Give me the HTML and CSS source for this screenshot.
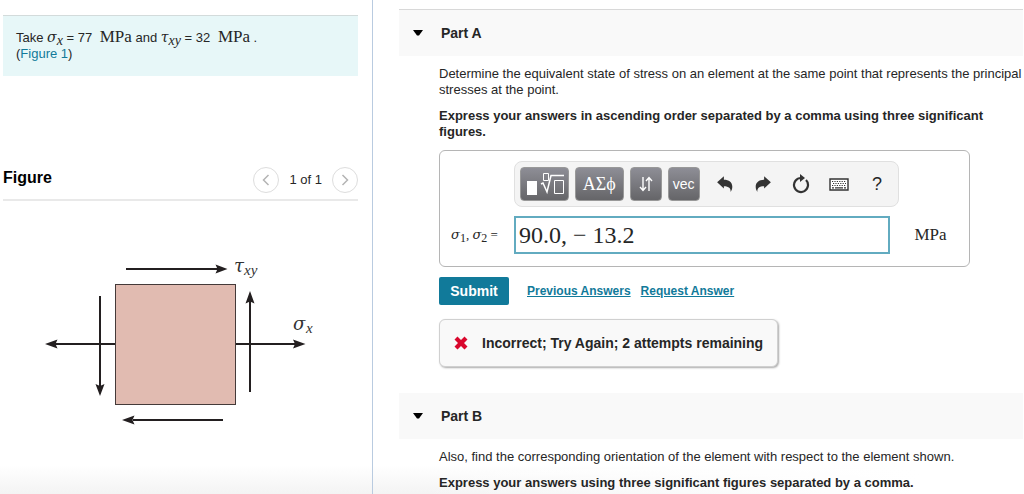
FILE: index.html
```html
<!DOCTYPE html>
<html lang="en">
<head>
<meta charset="utf-8">
<meta name="viewport" content="width=device-width, initial-scale=1">
<title>Principal stresses</title>
<link rel="stylesheet" href="styles.css">
</head>
<body>
<div class="page">
  <aside class="sidebar">
    <div class="given">
      <p>Take <span class="math"><i>σ</i><sub><i>x</i></sub></span> = 77 <span class="math quantity">MPa</span> and <span class="math"><i>τ</i><sub><i>xy</i></sub></span> = 32 <span class="math quantity">MPa</span> .</p>
      <p>(<a href="#figure">Figure 1</a>)</p>
    </div>
    <section class="figure" id="figure">
      <header class="figure-head">
        <h2>Figure</h2>
        <nav class="pager" aria-label="Figures">
          <button type="button" aria-label="Previous figure"><svg width="8" height="12" viewBox="0 0 8 12"><path d="M6.5 1 1.5 6l5 5"/></svg></button>
          <span>1 of 1</span>
          <button type="button" aria-label="Next figure"><svg width="8" height="12" viewBox="0 0 8 12"><path d="m1.500 1 5 5-5 5"/></svg></button>
        </nav>
      </header>
      <svg class="diagram" viewBox="0 0 355 180" role="img" aria-label="Stress element">
        <rect x="112.5" y="34.5" width="120" height="120" fill="#e1bbb1" stroke="#443a39"/>
        <g stroke="#231f20" stroke-width="2" fill="none">
          <path d="M123 19h94M220 170h-90M97 46v92M247 142V50M112 94H50M233 94h62"/>
        </g>
        <g fill="#231f20">
          <path d="m224.500 19-12-4.500 2 4.500-2 4.500zM119 170l12.500-4.500-2 4.500 2 4.500zM97 146l-4.500-12 4.500 2 4.500-2zM247 41l-4.500 12.500 4.500-2 4.500 2zM42 94l12.500-4.500-2 4.500 2 4.500zM302.500 94l-12.500-4.500 2 4.500-2 4.500z"/>
        </g>
        <g class="diagram-text">
          <text class="symbol" x="231" y="22">τ</text><text x="241" y="25">xy</text>
          <text class="symbol" x="290" y="80">σ</text><text x="303" y="83">x</text>
        </g>
      </svg>
    </section>
  </aside>

  <main class="content">
    <section class="part">
      <h2 class="part-head part-head-first"><button type="button" aria-expanded="true"><svg width="10" height="6" viewBox="0 0 10 6"><path d="M0 0h10L6 5.500H4z"/></svg>Part A</button></h2>
      <div class="part-body">
        <p>Determine the equivalent state of stress on an element at the same point that represents the principal stresses at the point.</p>
        <p class="strong narrow">Express your answers in ascending order separated by a comma using three significant figures.</p>
        <form class="work">
          <div class="answer">
            <div class="toolbar">
              <button class="key key-wide" type="button" aria-label="Templates">
                <svg width="40" height="26" viewBox="0 0 40 26" fill="none" stroke="#fff"><path fill="#fff" stroke="none" d="M3 10h10v14H3z"/><path d="M19.500 2.500h5v7h-5zM30.500 9.500h9v13h-9z"/><path stroke-width="1.500" d="m17 13 2-1 4 9 4-16.500h13"/></svg>
              </button>
              <button class="key key-wide greek" type="button">ΑΣϕ</button>
              <button class="key" type="button" aria-label="Subscripts and superscripts">
                <svg width="14" height="18" viewBox="0 0 14 18" fill="none" stroke="#fff" stroke-width="1.400"><path d="M4 2v13M1 12l3 3.500L7 12M10 16V3M7 6l3-3.500L13 6"/></svg>
              </button>
              <button class="key" type="button">vec</button>
              <button class="tool tool-first" type="button" aria-label="Undo">
                <svg width="18" height="18" viewBox="0 0 16 16"><path d="M7 1v3.200c4.500 0 7.500 2.300 7.500 6.300 0 2-.7 3.500-1.500 4.500.3-3-1.500-5-6-5V12L1 6.500z"/></svg>
              </button>
              <button class="tool" type="button" aria-label="Redo">
                <svg width="18" height="18" viewBox="0 0 16 16"><path d="M9 1v3.200c-4.500 0-7.500 2.300-7.500 6.300 0 2 .7 3.500 1.500 4.500-.3-3 1.500-5 6-5V12l6-5.500z"/></svg>
              </button>
              <button class="tool" type="button" aria-label="Reset">
                <svg width="18" height="20" viewBox="0 0 18 20"><path fill="none" stroke="#333" stroke-width="2.200" d="M9 4a7 7 0 1 0 5 2.100"/><path d="m8 0 5 4-5 4z"/></svg>
              </button>
              <button class="tool" type="button" aria-label="Keyboard shortcuts">
                <svg class="keyboard" width="20" height="13" viewBox="0 0 20 13"><path fill="#fff" stroke="#333" stroke-width="1.400" d="M1 1h18v11H1z"/><path fill="none" stroke="#333" stroke-width="1.200" stroke-dasharray="1.200 1.200" d="M3 3.500h14M4 5.500h13M3 7.500h14"/><path stroke="#333" stroke-width="1.200" d="M3 9.800h2M6 9.800h8M15 9.800h2"/></svg>
              </button>
              <button class="tool help" type="button">?</button>
            </div>
            <label class="math answer-label" for="answer"><i>σ</i><sub>1</sub>, <i>σ</i><sub>2</sub> =</label>
            <input class="answer-input" id="answer" type="text" value="90.0, − 13.2">
            <span class="math unit">MPa</span>
          </div>
          <div class="actions">
            <button class="submit" type="button">Submit</button>
            <a href="#previous">Previous Answers</a>
            <a href="#request">Request Answer</a>
          </div>
          <div class="feedback" role="status">
            <svg width="14" height="14" viewBox="0 0 14 14"><path fill="#d9082d" d="m3.500 0.500 3.500 3.500 3.500-3.500 3 3L10 7l3.500 3.500-3 3L7 10l-3.500 3.500-3-3L4 7 .5 3.500z"/></svg>
            <span>Incorrect; Try Again; 2 attempts remaining</span>
          </div>
        </form>
      </div>
    </section>
    <section class="part">
      <h2 class="part-head"><button type="button" aria-expanded="true"><svg width="10" height="6" viewBox="0 0 10 6"><path d="M0 0h10L6 5.500H4z"/></svg>Part B</button></h2>
      <div class="part-body">
        <p>Also, find the corresponding orientation of the element with respect to the element shown.</p>
        <p class="strong">Express your answers using three significant figures separated by a comma.</p>
      </div>
    </section>
  </main>
</div>
</body>
</html>
```

FILE: styles.css
```css
* {
  box-sizing: border-box;
}

body {
  margin: 0;
  font: 13px/16px "Liberation Sans", Arial, sans-serif;
  color: #262626;
  background: #fff;
}

p,
h2 {
  margin: 0;
}

button {
  padding: 0;
  border: 0;
  background: none;
  font: inherit;
  color: inherit;
}

svg {
  display: block;
}

a {
  color: #117a9a;
}

.page {
  display: grid;
  grid-template-columns: minmax(0, 373fr) minmax(0, 651fr);
  min-height: 100vh;
  background:
    linear-gradient(to right, transparent 40%, #fff 90%),
    linear-gradient(to top, #f1f1f1, #fff 36px);
}

.math {
  font-family: "Liberation Serif", "Times New Roman", serif;
  font-size: 17px;
}

.math > i {
  font-family: "DejaVu Serif", serif;
  font-size: 14px;
}

.math sub {
  font-size: 14px;
  line-height: 0;
  vertical-align: -3px;
}

.quantity {
  margin-left: 4px;
}

/* Left column */

.sidebar {
  padding: 15px 14px 0 3px;
  border-right: 1px solid #b9cbe0;
}

.given {
  padding: 12px 13px 14px;
  border-top: 1px solid #d3dbdb;
  background: #e7f7f8;
  line-height: 17px;
}

.given p {
  height: 17px;
}

.given a {
  text-decoration: none;
}

.figure {
  margin-top: 91px;
}

.figure-head {
  display: flex;
  justify-content: space-between;
  padding-bottom: 6px;
  border-bottom: 2px solid #e9e9e9;
}

.figure-head h2 {
  font-size: 16px;
  line-height: 22px;
  color: #000;
}

.pager {
  display: flex;
  align-items: center;
  gap: 10px;
}

.pager button {
  display: grid;
  place-items: center;
  width: 26px;
  height: 26px;
  border: 1px solid #ddd;
  border-radius: 50%;
  background: #fff;
}

.pager path {
  fill: none;
  stroke: #b4b4b4;
  stroke-width: 1.5;
}

.diagram {
  width: 100%;
  margin-top: 49px;
}

.diagram-text {
  font-family: "Liberation Serif", serif;
  font-size: 15px;
  font-style: italic;
  fill: #333;
}

.symbol {
  font-family: "DejaVu Serif", serif;
  font-size: 18px;
}

/* Right column */

.content {
  padding: 9px 1px 0 26px;
}

.part-head {
  background: #f9f9f9;
  font-size: 14px;
}

.part-head-first {
  border-top: 1px solid #d8d8d8;
}

.part-head button {
  display: flex;
  align-items: center;
  gap: 18px;
  width: 100%;
  padding: 15px 14px;
}

.part-body {
  display: grid;
  gap: 10px;
  padding: 10px 0 10px 40px;
}

.strong {
  font-weight: bold;
}

.narrow {
  max-width: 560px;
}

.work {
  display: grid;
  justify-items: start;
  padding-bottom: 16px;
}

.answer {
  display: grid;
  grid-template-columns: 52px minmax(0, 376fr) minmax(0, 57fr);
  column-gap: 11px;
  row-gap: 9px;
  align-items: center;
  width: 91%;
  padding: 10px 11px 12px;
  border: 1px solid #b5b5b5;
  border-radius: 6px;
  background: #fff;
}

.toolbar {
  grid-column: 2 / 4;
  display: flex;
  align-items: center;
  gap: 6px;
  width: 385px;
  padding: 5px;
  border: 1px solid #e0e0e0;
  border-radius: 8px;
  background: #f4f4f4;
}

.key {
  display: grid;
  place-items: center;
  width: 32px;
  height: 34px;
  border: 1px solid #999;
  border-radius: 4px;
  background: linear-gradient(#8e8e96, #656568);
  font-size: 14px;
  color: #fff;
}

.key-wide {
  width: 49px;
}

.greek {
  font-family: "Liberation Serif", serif;
  font-size: 18px;
}

.tool {
  display: grid;
  place-items: center;
  width: 32px;
  height: 34px;
}

.tool-first {
  margin-left: 4px;
}

.tool path {
  fill: #333;
}

.tool path[fill="none"] {
  fill: none;
}

.tool path[fill="#fff"] {
  fill: #fff;
}

.help {
  font-size: 18px;
}

.answer-label {
  white-space: nowrap;
  font-size: 13px;
}

.answer-label > i {
  font-size: 13px;
}

.answer-label sub {
  font-size: 12px;
}

.answer-input {
  width: 100%;
  height: 38px;
  padding: 0 3px;
  border: 2px solid #62abc0;
  border-radius: 0;
  background: #fff;
  font: 24px "Liberation Serif", serif;
  color: #262626;
}

.unit {
  padding-left: 13px;
}

.actions {
  display: flex;
  align-items: center;
  gap: 10px;
  margin-top: 10px;
  font-size: 12px;
  font-weight: bold;
}

.submit {
  width: 70px;
  height: 28px;
  margin-right: 8px;
  border-radius: 2px;
  background: #117a9a;
  font-size: 14px;
  color: #fff;
}

.feedback {
  display: flex;
  align-items: center;
  gap: 14px;
  margin-top: 14px;
  padding: 15px 14px;
  border: 1px solid #d0d0d0;
  border-radius: 6px;
  background: #f9f9f9;
  box-shadow: 1px 1px 2px #aaa;
  font-size: 14px;
  font-weight: bold;
}
```
